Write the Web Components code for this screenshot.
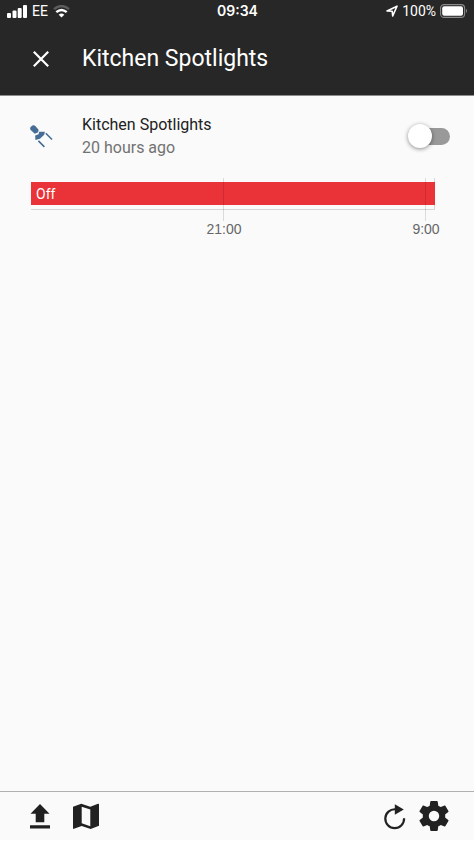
<!DOCTYPE html>
<html lang="en">
<head>
<meta charset="utf-8">
<meta name="viewport" content="width=device-width, initial-scale=1">
<title>Kitchen Spotlights</title>
<style>
  html, body { margin: 0; height: 100%; }
  body { background: #fafafa; font-family: Roboto, "Liberation Sans", sans-serif; }
</style>
</head>
<body>
<more-info-page></more-info-page>
<script>
const define = (name, html) => {
  const template = document.createElement('template');
  template.innerHTML = html;
  customElements.define(name, class extends HTMLElement {
    constructor() {
      super();
      this.attachShadow({ mode: 'open' }).append(template.content.cloneNode(true));
    }
  });
};

define('status-bar', `
  <style>
    :host { display: grid; grid-template-columns: 1fr auto 1fr; align-items: center; height: 22px; padding: 0 6px 0 7px; color: #fff; font-size: 14px; line-height: 22px; }
    .side { display: flex; align-items: center; gap: 5px; }
    .end { justify-content: flex-end; gap: 4px; }
    .time { font-family: Inter, "Liberation Sans", sans-serif; font-weight: 600; }
    svg { display: block; flex: none; }
  </style>
  <div class="side">
    <svg width="20" height="13" viewBox="0 0 20 13" fill="#fff" aria-label="Signal"><rect y="8" width="4" height="5" rx="1"/><rect x="5.500" y="5.500" width="4" height="7.500" rx="1"/><rect x="10.700" y="3" width="4" height="10" rx="1"/><rect x="16" width="4" height="13" rx="1"/></svg>
    <span>EE</span>
    <svg width="17" height="13" viewBox="0 0 17 13" fill="none" stroke="#fff" stroke-width="2.400" aria-label="Wi-Fi"><path d="M1 4.200Q8.500-2 16 4.200" stroke="#5c5c5c"/><path d="M3.300 7.200Q8.500 2.600 13.700 7.200"/><path d="M5.700 9.700Q8.500 7.200 11.300 9.700L8.500 12.600Z" fill="#fff" stroke="none"/></svg>
  </div>
  <span class="time">09:34</span>
  <div class="side end">
    <svg width="12" height="12" viewBox="0 0 12 12" fill="none" stroke="#fff" stroke-width="1.600" stroke-linejoin="round" aria-label="Location"><path d="M1 6 11 1.200 6.700 11 6.200 6.200Z"/></svg>
    <span>100%</span>
    <svg width="28" height="14" viewBox="0 0 28 14" aria-label="Battery"><rect x=".6" y=".6" width="24" height="12.800" rx="3.500" fill="none" stroke="#8a8a8a" stroke-width="1.100"/><rect x="2.200" y="2.200" width="20.800" height="9.600" rx="2" fill="#fff"/><path d="M26 4.800Q28 7 26 9.200Z" fill="#8a8a8a"/></svg>
  </div>`);

define('page-header', `
  <style>
    :host { display: block; background: #272727; border-bottom: 1px solid #8c8c8c; color: #fff; }
    .bar { display: flex; align-items: center; height: 73px; padding: 0 24px 0 28px; gap: 28px; }
    button { display: block; width: 26px; height: 26px; padding: 0; border: 0; background: none; color: inherit; }
    svg { display: block; }
    h1 { margin: 0; font-size: 23px; line-height: 30px; font-weight: 400; }
  </style>
  <status-bar></status-bar>
  <div class="bar">
    <button type="button" aria-label="Close"><svg width="26" height="26" viewBox="0 0 26 26" fill="none" stroke="currentColor" stroke-width="2.200"><path d="M5.800 5.800 20.200 20.200M20.200 5.800 5.800 20.200"/></svg></button>
    <h1><slot></slot></h1>
  </div>`);

define('toggle-switch', `
  <style>
    :host { display: block; }
    input { appearance: none; display: flex; align-items: center; width: 38px; height: 17px; margin: 0; border-radius: 9px; background: #999; }
    input::before { content: ""; width: 24px; height: 24px; margin-left: -4px; flex: none; border-radius: 50%; background: #fff; box-shadow: 0 1px 4px rgba(0,0,0,.45); }
    input:checked { background: #7fa8cc; justify-content: flex-end; }
  </style>
  <input type="checkbox" role="switch" aria-label="Kitchen Spotlights">`);

define('entity-row', `
  <style>
    :host { display: flex; align-items: center; padding: 0 24px 0 28px; }
    svg { display: block; flex: none; }
    .text { flex: 1; margin-left: 28px; font-size: 16px; line-height: 23px; color: #212121; }
    .ago { color: #727272; }
  </style>
  <svg width="26" height="26" viewBox="0 0 26 26" fill="#476d97" aria-hidden="true">
    <path d="M2.400 6.800Q1.600 5.300 2.600 4L4.400 2.600Q6 1.800 7.300 2.900L10.600 6.700 10.200 9.200 6.800 10.800Z"/>
    <path d="M11.200 8.700H16.900L16.200 11.700 12 15.700 7.400 16.900 7.200 12.600 10.600 11.200Z"/>
    <path d="M17.800 10.300 24 16.500M10.400 17.900 16.400 23.900" stroke="#476d97" stroke-width="1.600"/>
  </svg>
  <div class="text"><div><slot></slot></div><div class="ago"><slot name="changed"></slot></div></div>
  <toggle-switch></toggle-switch>`);

define('history-timeline', `
  <style>
    :host { display: block; padding: 0 39px 0 31px; }
    .plot { display: grid; grid-template-rows: 4px 23px 5px 11px; }
    .bar { grid-area: 2 / 1; background: #ea3338; color: #fff; font-size: 14px; line-height: 24px; padding-left: 5px; }
    .frame { grid-area: 1 / 1 / 4 / 2; border: solid rgba(0,0,0,.14); border-width: 0 1px 1px 0; }
    .ticks { grid-area: 1 / 1 / 5 / 2; }
    .ticks, .labels { display: grid; grid-template-columns: 193fr 202fr 9fr; }
    .ticks i { border-right: 1px solid rgba(0,0,0,.12); }
    .labels { font-family: "Liberation Sans", sans-serif; font-size: 14px; line-height: 17px; color: #666; }
    .labels span { justify-self: end; width: 0; display: flex; justify-content: center; white-space: nowrap; }
  </style>
  <div class="plot">
    <div class="frame"></div>
    <div class="bar"><slot></slot></div>
    <div class="ticks"><i></i><i></i></div>
  </div>
  <div class="labels"><span>21:00</span><span>9:00</span></div>`);

define('bottom-toolbar', `
  <style>
    :host { display: flex; align-items: center; justify-content: space-between; height: 48px; padding: 0 24px; border-top: 1px solid #b0b0b0; border-bottom: 2px solid #fff; color: #212121; }
    div { display: flex; align-items: center; gap: 14px; }
    .end { gap: 7px; }
    button { display: block; width: 32px; height: 32px; padding: 0; border: 0; background: none; color: inherit; }
    svg { display: block; }
  </style>
  <div>
    <button type="button" aria-label="Upload"><svg width="32" height="32" viewBox="0 0 32 32" fill="currentColor"><path d="M16 4 25.500 13.700H20.300V22.300H11.700V13.700H6.500ZM6 25.300H26V28.500H6Z"/></svg></button>
    <button type="button" aria-label="Map"><svg width="32" height="32" viewBox="0 0 32 32" fill="currentColor" fill-rule="evenodd"><path d="M3 6.700 11.300 3.700 20.300 6.800 28 3.800Q29 3.500 29 4.500V25.800L20.700 29 11.700 25.900 4 28.800Q3 29.100 3 28.200ZM11.700 6.700V23.300L20.300 26.200V9.600Z"/></svg></button>
  </div>
  <div class="end">
    <button type="button" aria-label="Refresh"><svg width="32" height="32" viewBox="1 0 32 32"><path d="M17.500 9.300A9.400 9.400 0 1 0 26.100 18.300" fill="none" stroke="currentColor" stroke-width="2.200"/><path d="M16.800 4.300 25.800 9.600 16.800 14.800Z" fill="currentColor"/></svg></button>
    <button type="button" aria-label="Settings"><svg width="32" height="32" viewBox="1.300 1.300 21.400 21.400" fill="currentColor"><path d="M12 15.500A3.500 3.500 0 0 1 8.500 12 3.500 3.500 0 0 1 12 8.500 3.500 3.500 0 0 1 15.500 12 3.500 3.500 0 0 1 12 15.500M19.430 12.970C19.470 12.650 19.500 12.330 19.500 12S19.470 11.340 19.430 11L21.540 9.370C21.730 9.220 21.780 8.950 21.660 8.730L19.660 5.270C19.540 5.050 19.270 4.960 19.050 5.050L16.560 6.050C16.040 5.660 15.500 5.320 14.870 5.070L14.500 2.420C14.460 2.180 14.250 2 14 2H10C9.750 2 9.540 2.180 9.500 2.420L9.130 5.070C8.500 5.320 7.960 5.660 7.440 6.050L4.950 5.050C4.730 4.960 4.460 5.050 4.340 5.270L2.340 8.730C2.210 8.950 2.270 9.220 2.460 9.370L4.570 11C4.530 11.340 4.500 11.670 4.500 12S4.530 12.650 4.570 12.970L2.460 14.630C2.270 14.780 2.210 15.050 2.340 15.270L4.340 18.730C4.460 18.950 4.730 19.030 4.950 18.950L7.440 17.940C7.960 18.340 8.500 18.680 9.130 18.930L9.500 21.580C9.540 21.820 9.750 22 10 22H14C14.250 22 14.460 21.820 14.500 21.580L14.870 18.930C15.500 18.670 16.040 18.340 16.560 17.940L19.050 18.950C19.270 19.030 19.540 18.950 19.660 18.730L21.660 15.270C21.780 15.050 21.730 14.780 21.540 14.630Z"/></svg></button>
  </div>`);

define('more-info-page', `
  <style>
    :host { display: flex; flex-direction: column; min-height: 100%; }
    main { flex: 1; display: flex; flex-direction: column; gap: 19px; padding-top: 17px; }
  </style>
  <page-header>Kitchen Spotlights</page-header>
  <main>
    <entity-row>Kitchen Spotlights<span slot="changed">20 hours ago</span></entity-row>
    <history-timeline>Off</history-timeline>
  </main>
  <bottom-toolbar></bottom-toolbar>`);
</script>
</body>
</html>
